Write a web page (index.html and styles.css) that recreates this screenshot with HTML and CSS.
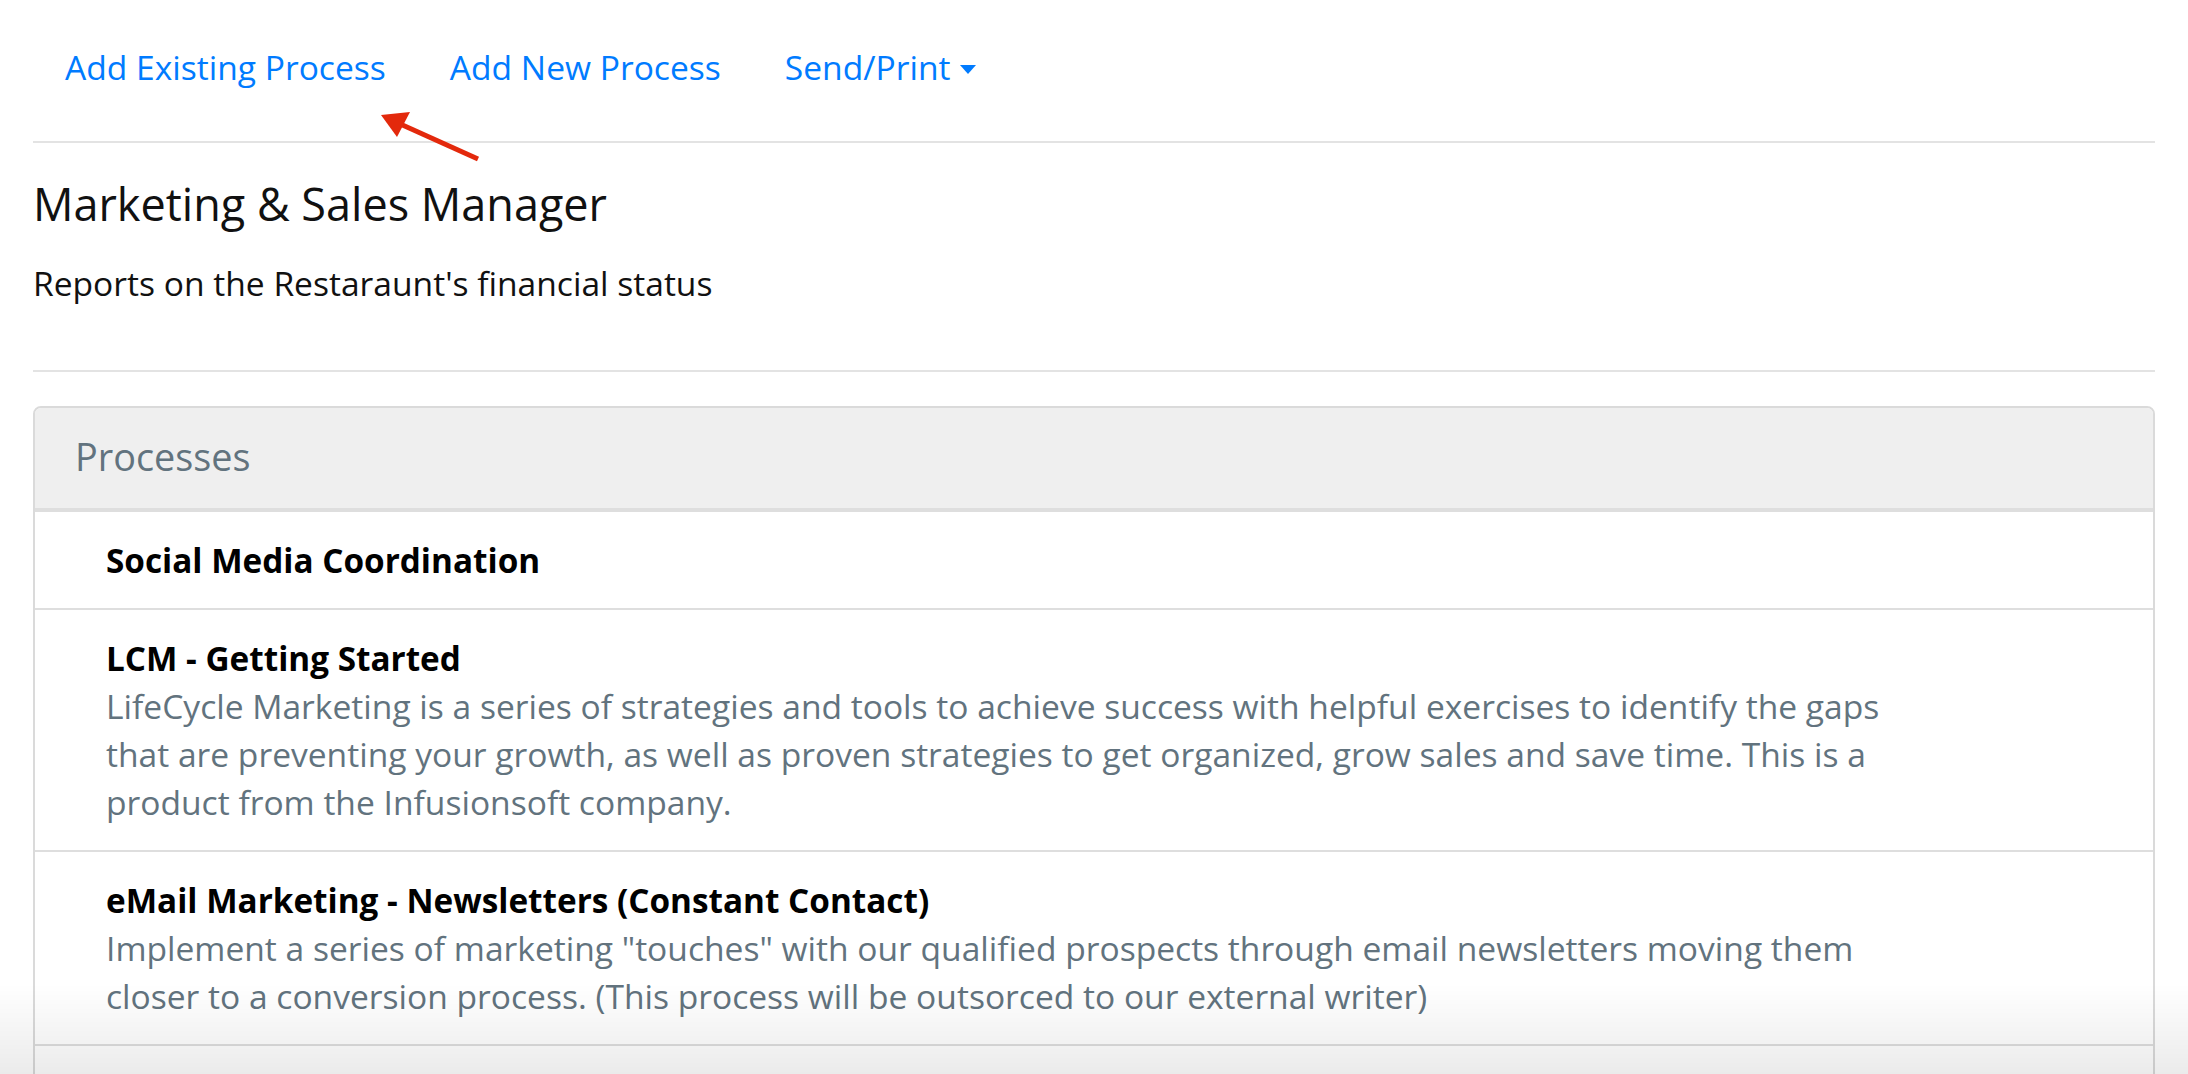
FILE: index.html
```html
<!DOCTYPE html>
<html lang="en">
  <head>
    <meta charset="UTF-8" />
    <meta name="viewport" content="width=device-width, initial-scale=1.0" />
    <title>Marketing &amp; Sales Manager</title>
    <link rel="stylesheet" href="styles.css">
  </head>
  <body>
    <div class="container">
      <ul class="nav">
        <li><a class="nav-link" href="#">Add Existing Process</a></li>
        <li><a class="nav-link" href="#">Add New Process</a></li>
        <li><a class="nav-link dropdown-toggle" href="#">Send/Print</a></li>
      </ul>

      <hr />

      <h4 class="role-title">Marketing &amp; Sales Manager</h4>
      <p class="role-desc">Reports on the Restaraunt's financial status</p>

      <hr class="section-rule" />

      <div class="card">
        <div class="card-header">Processes</div>
        <ul class="list-group">
          <li class="list-group-item">
            <div class="process-title">Social Media Coordination</div>
          </li>
          <li class="list-group-item">
            <div class="process-title">LCM - Getting Started</div>
            <div class="process-desc">
              LifeCycle Marketing is a series of strategies and tools to achieve success with helpful exercises to identify the gaps that are preventing your growth, as well as proven strategies to get organized, grow sales and save time. This is a product from the Infusionsoft company.
            </div>
          </li>
          <li class="list-group-item">
            <div class="process-title">eMail Marketing - Newsletters (Constant Contact)</div>
            <div class="process-desc">
              Implement a series of marketing "touches" with our qualified prospects through email newsletters moving them closer to a conversion process. (This process will be outsorced to our external writer)
            </div>
          </li>
          <li class="list-group-item list-group-item-empty"></li>
        </ul>
      </div>
    </div>

    <!-- annotation arrow pointing at "Add Existing Process" -->
    <svg class="pointer-arrow" width="120" height="70" viewBox="0 0 120 70">
      <line x1="108" y1="59" x2="28" y2="23" stroke="#e3290c" stroke-width="5" />
      <polygon points="11,15 40,12 27,37" fill="#e3290c" />
    </svg>

    <div class="bottom-fade"></div>
  </body>
</html>
```

FILE: styles.css
```css
/* Base */
* {
  box-sizing: border-box;
  margin: 0;
  padding: 0;
}

body {
  font-family: "Open Sans", "Liberation Sans", sans-serif;
  font-size: 33.6px;
  line-height: 48px;
  color: #111;
  background-color: #fff;
}

.container {
  padding: 0 33px;
}

/* Top navigation */
.nav {
  display: flex;
  list-style: none;
  padding-top: 27px;
}

.nav-link {
  display: block;
  padding: 16px 32px;
  color: #007bff;
  text-decoration: none;
}

.dropdown-toggle::after {
  content: "";
  display: inline-block;
  margin-left: 9px;
  vertical-align: 6px;
  border-top: 9px solid #007bff;
  border-left: 8px solid transparent;
  border-right: 8px solid transparent;
}

hr {
  border: none;
  border-top: 2px solid #e3e3e3;
  margin-top: 34px;
}

/* Role header */
.role-title {
  font-size: 45px;
  line-height: 53px;
  font-weight: 400;
  margin-top: 34px;
}

.role-desc {
  margin-top: 29px;
}

.section-rule {
  margin-top: 63px;
}

/* Card */
.card {
  margin-top: 34px;
  border: 2px solid #dadada;
  border-radius: 8px;
  overflow: hidden;
}

.card-header {
  background-color: #efefef;
  color: #62737e;
  font-size: 37.8px;
  line-height: 46px;
  padding: 26px 40px 28px;
  border-bottom: 4px solid #dedede;
}

.list-group {
  list-style: none;
}

.list-group-item {
  padding: 24px 40px 24px 71px;
  border-top: 2px solid #dedede;
}

.list-group-item:first-child {
  border-top: none;
}

.list-group-item-empty {
  height: 98px;
}

.process-title {
  font-size: 33.3px;
  font-weight: 700;
  color: #000;
}

.process-desc {
  max-width: 1830px;
  color: #62737e;
}

/* Overlays */
.pointer-arrow {
  position: absolute;
  left: 370px;
  top: 100px;
}

.bottom-fade {
  position: fixed;
  left: 0;
  right: 0;
  bottom: 0;
  height: 90px;
  background: linear-gradient(to bottom, rgba(0, 0, 0, 0), rgba(0, 0, 0, 0.08));
  pointer-events: none;
}
```
